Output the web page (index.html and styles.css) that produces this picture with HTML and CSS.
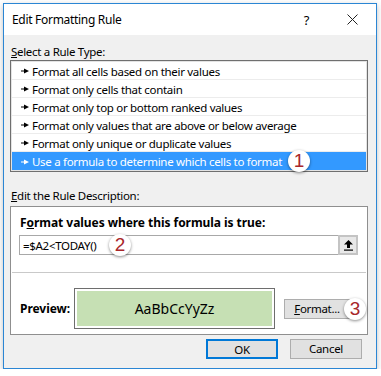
FILE: index.html
```html
<!DOCTYPE html>
<html>
<head>
<meta charset="utf-8">
<link rel="stylesheet" href="styles.css">
</head>
<body>
<div class="window">
  <div class="titlebar">
    <span class="title">Edit Formatting Rule</span>
    <span class="help">?</span>
    <svg class="close" width="11" height="11" viewBox="0 0 11 11"><path d="M0.5 0.5 L10.5 10.5 M10.5 0.5 L0.5 10.5" stroke="#222" stroke-width="1" fill="none"/></svg>
  </div>
  <div class="content">
    <div class="label"><u>S</u>elect a Rule Type:</div>
    <div class="listbox">
      <div class="row"><svg class="arr" width="8" height="6" viewBox="0 0 8 6"><path d="M0 2.5h4v1H0z M3 0.5 L8 3 L3 5.5z" fill="currentColor"/></svg>Format all cells based on their values</div>
      <div class="row"><svg class="arr" width="8" height="6" viewBox="0 0 8 6"><path d="M0 2.5h4v1H0z M3 0.5 L8 3 L3 5.5z" fill="currentColor"/></svg>Format only cells that contain</div>
      <div class="row"><svg class="arr" width="8" height="6" viewBox="0 0 8 6"><path d="M0 2.5h4v1H0z M3 0.5 L8 3 L3 5.5z" fill="currentColor"/></svg>Format only top or bottom ranked values</div>
      <div class="row"><svg class="arr" width="8" height="6" viewBox="0 0 8 6"><path d="M0 2.5h4v1H0z M3 0.5 L8 3 L3 5.5z" fill="currentColor"/></svg>Format only values that are above or below average</div>
      <div class="row"><svg class="arr" width="8" height="6" viewBox="0 0 8 6"><path d="M0 2.5h4v1H0z M3 0.5 L8 3 L3 5.5z" fill="currentColor"/></svg>Format only unique or duplicate values</div>
      <div class="row selected"><svg class="arr" width="8" height="6" viewBox="0 0 8 6"><path d="M0 2.5h4v1H0z M3 0.5 L8 3 L3 5.5z" fill="currentColor"/></svg>Use a formula to determine which cells to format<span class="badge b1">1</span></div>
    </div>
    <div class="label label2"><u>E</u>dit the Rule Description:</div>
    <div class="descbox">
      <div class="boldlabel">F<u>o</u>rmat values where this formula is true:</div>
      <div class="input">
        <span class="formula">=$A2&lt;TODAY()</span>
        <span class="badge b2">2</span>
        <span class="refbtn"><svg width="9" height="11" viewBox="0 0 9 11"><path d="M4.5 0 L9 4.5 L6 4.5 L6 8 L3 8 L3 4.5 L0 4.5 Z" fill="#000"/><rect x="0" y="9.5" width="9" height="1.2" fill="#000"/></svg></span>
      </div>
      <div class="sep"></div>
      <div class="preview-row">
        <span class="boldlabel pl">Preview:</span>
        <div class="preview"><div class="swatch">AaBbCcYyZz</div></div>
        <div class="fmtwrap">
          <button class="btn fmt"><u>F</u>ormat...</button>
          <span class="badge b3">3</span>
        </div>
      </div>
    </div>
    <div class="buttons">
      <button class="btn ok">OK</button>
      <button class="btn">Cancel</button>
    </div>
  </div>
</div>
</body>
</html>
```

FILE: styles.css
```css
* { box-sizing: border-box; }
body {
  margin: 0;
  background: #ffffff;
  font-family: "Noto Sans", "Open Sans", sans-serif;
  font-size: 11.5px;
  letter-spacing: -0.3px;
  color: #000;
}
.window {
  margin: 3px 0 0 3px;
  width: 374px;
  height: 366px;
  border: 1px solid #2b86d4;
  background: #f0f0f0;
  box-shadow: 0 2px 6px rgba(0,0,0,0.25);
  display: flex;
  flex-direction: column;
}
.titlebar {
  height: 31px;
  background: #ffffff;
  display: flex;
  align-items: center;
  padding-left: 8px;
}
.title {
  font-size: 12px;
  flex: 1;
  color: #000;
}
.help {
  font-size: 13px;
  margin-right: 38px;
}
.close {
  margin-right: 18px;
}
.content {
  padding: 9px 0 0 6px;
  flex: 1;
}
.label {
  height: 16px;
  line-height: 16px;
  padding-left: 1px;
}
.listbox {
  width: 358px;
  border: 1px solid #6f6f6f;
  box-shadow: inset 0 0 0 1px #e3e3e3;
  background: #fff;
  padding: 1px;
}
.row {
  height: 18px;
  display: flex;
  align-items: center;
  padding-left: 9px;
  padding-top: 1px;
  border-bottom: 1px solid #ececec;
  white-space: nowrap;
  position: relative;
}
.row .arr {
  margin-right: 3px;
  color: #000;
}
.row.selected {
  background: #3399ff;
  color: #fff;
  border-bottom: none;
}
.row.selected .arr { color: #fff; }
.badge {
  position: absolute;
  width: 22px;
  height: 22px;
  border-radius: 50%;
  background: #fff;
  box-shadow: 0 1px 3px rgba(0,0,0,0.45);
  color: #a8262a;
  font-family: "Liberation Sans", Arial, sans-serif;
  font-size: 19px;
  letter-spacing: 0;
  line-height: 22px;
  text-align: center;
}
.b1 { left: 276px; top: -2px; }
.label2 { margin-top: 16px; }
.descbox {
  margin-top: 2px;
  width: 358px;
  height: 129px;
  border: 1px solid #8f8f8f;
  background: #fff;
  padding: 8px 0 0 8px;
}
.boldlabel {
  font-weight: bold;
  font-size: 12px;
  letter-spacing: -0.05px;
  height: 16px;
  line-height: 16px;
  padding-left: 1px;
}
.input {
  margin-top: 4px;
  width: 339px;
  height: 20px;
  border: 1px solid #a8a8a8;
  display: flex;
  align-items: center;
  padding-left: 3px;
  position: relative;
}
.formula { flex: 1; }
.b2 { left: 89px; top: -2px; }
.refbtn {
  width: 20px;
  height: 20px;
  margin: -1px -1px -1px 0;
  border: 2px solid #c4c4c4;
  background: #e8e8e8;
  display: flex;
  align-items: center;
  justify-content: center;
}
.sep {
  height: 1px;
  background: #c9c9c9;
  margin: 17px 0 0 -7px;
  width: 354px;
}
.preview-row {
  display: flex;
  align-items: center;
  margin-top: 15px;
}
.pl { width: 55px; }
.preview {
  width: 201px;
  height: 41px;
  border: 1px solid #6e6e6e;
  padding: 2px;
  background: #fff;
}
.swatch {
  height: 100%;
  background: #c6e0b4;
  display: flex;
  align-items: center;
  justify-content: center;
  font-size: 14px;
  letter-spacing: 0;
  color: #000;
}
.fmtwrap {
  margin-left: 9px;
  position: relative;
}
.btn {
  font-family: inherit;
  font-size: 11.5px;
  letter-spacing: -0.3px;
  width: 72px;
  height: 20px;
  border: 1px solid #adadad;
  background: #e1e1e1;
  color: #000;
  padding: 0;
  line-height: 18px;
}
.fmt { width: 76px; padding-right: 10px; }
.b3 { left: 60px; top: -1px; }
.buttons {
  display: flex;
  justify-content: flex-end;
  gap: 12px;
  margin-top: 4px;
  padding-right: 14px;
}
.ok {
  border: 2px solid #0078d7;
}
```
